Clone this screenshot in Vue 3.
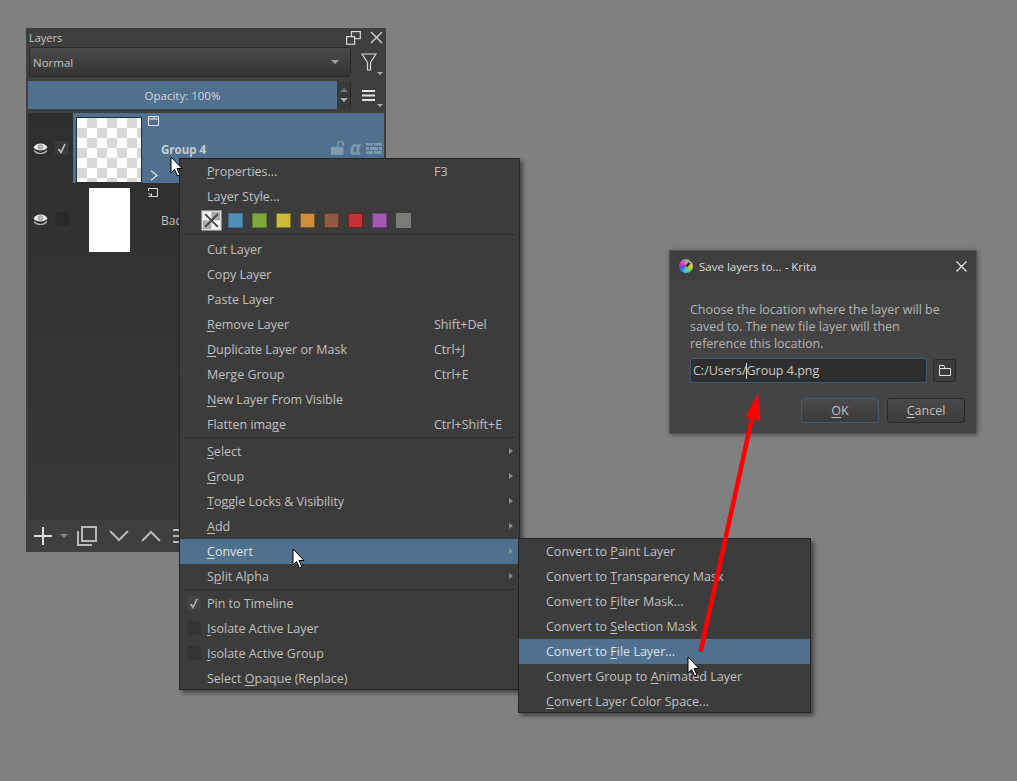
<script setup>
const main1 = [
  { t: '&Properties...', k: 'F3' },
  { t: 'La&yer Style...' },
]
const main2 = [
  { t: 'Cut Layer' },
  { t: 'Copy Layer' },
  { t: 'Paste Layer' },
  { t: '&Remove Layer', k: 'Shift+Del' },
  { t: '&Duplicate Layer or Mask', k: 'Ctrl+J' },
  { t: 'Merge Group', k: 'Ctrl+E' },
  { t: '&New Layer From Visible' },
  { t: 'Flatten ima&ge', k: 'Ctrl+Shift+E' },
]
const main3 = [
  { t: '&Select', sub: true },
  { t: '&Group', sub: true },
  { t: '&Toggle Locks & Visibility', sub: true },
  { t: '&Add', sub: true },
  { t: '&Convert', sub: true, on: true },
  { t: 'S&plit Alpha', sub: true },
]
const main4 = [
  { t: 'Pin to Timeline', check: 'on' },
  { t: '&Isolate Active Layer', check: 'off' },
  { t: '&Isolate Active Group', check: 'off' },
  { t: 'Select &Opaque (Replace)' },
]
const subs = [
  { t: 'Convert to &Paint Layer' },
  { t: 'Convert to &Transparency Mask' },
  { t: 'Convert to &Filter Mask...' },
  { t: 'Convert to &Selection Mask' },
  { t: 'Convert to &File Layer...', on: true },
  { t: 'Convert Group to &Animated Layer' },
  { t: '&Convert Layer Color Space...' },
]
const swatches = [
  ['#4f8fb8', '#3f6f8f'], ['#80a83a', '#5d7c2a'], ['#cbbb36', '#7d7326'], ['#d08f3c', '#7a5424'],
  ['#8f5a3f', '#5f3d2c'], ['#c43232', '#7a1f1f'], ['#a05ab0', '#6e3f7a'], ['#7a7c78', '#7a7c78'],
]
function parts(s) {
  const i = s.search(/&\S/)
  if (i < 0) return [s, '', '']
  return [s.slice(0, i), s[i + 1], s.slice(i + 2)]
}
</script>

<template>
  <div class="desk">
    <section class="panel">
      <header class="ptitle">
        <span>Layers</span>
        <span class="ptools">
          <svg width="15" height="14" viewBox="0 0 15 14" fill="none" stroke="#d8d8d8" stroke-width="1.2"><rect x="5.500" y="0.600" width="8.800" height="7"/><rect x="0.600" y="5.600" width="8" height="7.600" fill="#3f3f3f"/></svg>
          <svg width="13" height="13" viewBox="0 0 13 13" stroke="#d8d8d8" stroke-width="1.3"><path d="M1 1l11 11M12 1L1 12"/></svg>
        </span>
      </header>
      <div class="prow">
        <div class="combo"><span>Normal</span><i class="caret"></i></div>
        <div class="sidebtn">
          <svg width="16" height="18" viewBox="0 0 16 18" fill="none" stroke="#d8d8d8" stroke-width="1.2"><path d="M1 1h14L9.500 9.500V17H6.500V9.500z"/></svg>
          <i class="mini"></i>
        </div>
      </div>
      <div class="prow op">
        <div class="slider">
          <div class="sfill">Opacity: 100%</div>
          <div class="spin"><i class="up"></i><i class="down"></i></div>
        </div>
        <div class="sidebtn ham">
          <svg width="13" height="11" viewBox="0 0 13 11" stroke="#e2e2e2" stroke-width="2"><path d="M0 1h13M0 5.500h13M0 10h13"/></svg>
          <i class="mini"></i>
        </div>
      </div>
      <div class="layers">
        <div class="layer first">
          <div class="lcol">
            <svg class="eye" width="15" height="14" viewBox="0 0 15 14"><path d="M1 9.500C4.500 13.500 10.500 13.500 14 9.500" fill="none" stroke="#b0b0b0" stroke-width="1.200"/><path d="M.5 6.500C3 1 12 1 14.500 6.500 12 10.500 3 10.500 .5 6.500z" fill="#ececec"/><circle cx="7.500" cy="6" r="2.800" fill="#a4a4a4"/><circle cx="7.500" cy="6" r="1.300" fill="#c8c8c8"/></svg>
            <div class="cb">
              <svg width="10" height="11" viewBox="0 0 10 11" fill="none" stroke="#c8c8c8" stroke-width="1.600"><path d="M1.500 6l2.500 3.500 4-8.500"/></svg>
            </div>
          </div>
          <div class="lbody sel">
            <div class="thumb"></div>
            <div class="side">
              <svg width="11" height="10" viewBox="0 0 11 10" fill="none" stroke="#e8e8e8"><path d="M.5.500h10v9H.5zM.5 3h10M6 .5V3"/></svg>
              <svg class="chev" width="8" height="11" viewBox="0 0 8 11" fill="none" stroke="#dcdcdc" stroke-width="1.300"><path d="M1 .8l6 4.700-6 4.700"/></svg>
            </div>
            <div class="lname bold">Group 4</div>
            <div class="lflags">
              <svg width="13" height="14" viewBox="0 0 13 14" fill="#7f98ae"><path d="M0 6h12.500v8H0zM7.500 6V3a2 2 0 014 0v2h1.500V3a3.500 3.500 0 00-7 0v3z"/></svg>
              <span class="alpha">α</span>
              <svg width="16" height="11" viewBox="0 0 16 11" fill="#7f98ae"><path d="M0 0h7v2.500H0zM8 0h8v2.500H8zM0 4h3v3H0zM4 4h8v3H4zM13 4h3v3h-3zM0 8h7v3H0zM8 8h8v3H8z"/></svg>
            </div>
          </div>
        </div>
        <div class="layer second">
          <div class="lcol">
            <svg class="eye" width="15" height="14" viewBox="0 0 15 14"><path d="M1 9.500C4.500 13.500 10.500 13.500 14 9.500" fill="none" stroke="#b0b0b0" stroke-width="1.200"/><path d="M.5 6.500C3 1 12 1 14.500 6.500 12 10.500 3 10.500 .5 6.500z" fill="#ececec"/><circle cx="7.500" cy="6" r="2.800" fill="#a4a4a4"/><circle cx="7.500" cy="6" r="1.300" fill="#c8c8c8"/></svg>
            <div class="cb"></div>
          </div>
          <div class="lbody">
            <div class="thumb2"><div class="white"></div></div>
            <div class="side s2">
              <svg width="10" height="9" viewBox="0 0 10 9" fill="none" stroke="#dcdcdc"><path d="M.5 3V.5h9v8H4M.5 5l3 3M.5 8.500h3v-3"/></svg>
            </div>
            <div class="lname">Background</div>
          </div>
        </div>
      </div>
      <footer class="ptools-bar">
        <svg width="18" height="18" viewBox="0 0 18 18" stroke="#dcdcdc" stroke-width="2"><path d="M9 0v18M0 9h18"/></svg>
        <i class="tcaret"></i>
        <svg width="20" height="20" viewBox="0 0 20 20" fill="none" stroke="#b8b8b8" stroke-width="2"><path d="M5 1h14v14H5zM1 5v14h14"/></svg>
        <svg width="20" height="12" viewBox="0 0 20 12" fill="none" stroke="#b8b8b8" stroke-width="2"><path d="M1 1l9 9 9-9"/></svg>
        <svg width="20" height="12" viewBox="0 0 20 12" fill="none" stroke="#b8b8b8" stroke-width="2"><path d="M1 11l9-9 9 9"/></svg>
        <svg width="12" height="14" viewBox="0 0 12 14" stroke="#b8b8b8" stroke-width="2"><path d="M0 1h12M0 7h12M0 13h12"/></svg>
      </footer>
    </section>

    <nav class="menu main">
      <div v-for="m in main1" :key="m.t" class="item">
        <span class="lab">{{ parts(m.t)[0] }}<u>{{ parts(m.t)[1] }}</u>{{ parts(m.t)[2] }}</span>
        <span class="key">{{ m.k }}</span>
      </div>
      <div class="swatches">
        <span class="none"><svg width="17" height="17" viewBox="0 0 16 16"><path d="M0 0h8v8H0z" fill="#f2f2f2"/><path d="M8 0h8v8H8zM0 8h8v8H0z" fill="#a8a8a8"/><path d="M8 8h8v8H8z" fill="#f2f2f2"/><path d="M2 2l12 12M14 2L2 14" stroke="#444" stroke-width="1.800"/></svg></span>
        <span v-for="s in swatches" :key="s[0]" class="sw" :style="{ background: s[0], borderColor: s[1] }"></span>
      </div>
      <div class="sep first-sep"></div>
      <div v-for="m in main2" :key="m.t" class="item">
        <span class="lab">{{ parts(m.t)[0] }}<u>{{ parts(m.t)[1] }}</u>{{ parts(m.t)[2] }}</span>
        <span class="key">{{ m.k }}</span>
      </div>
      <div class="sep"></div>
      <div v-for="m in main3" :key="m.t" class="item" :class="{ on: m.on }">
        <span class="lab">{{ parts(m.t)[0] }}<u>{{ parts(m.t)[1] }}</u>{{ parts(m.t)[2] }}</span>
        <i class="arrow"></i>
      </div>
      <div class="sep"></div>
      <div v-for="m in main4" :key="m.t" class="item">
        <span v-if="m.check" class="mcheck" :class="{ lit: m.check === 'on' }">
          <svg v-if="m.check === 'on'" width="10" height="11" viewBox="0 0 10 11" fill="none" stroke="#b4b4b4" stroke-width="1.600"><path d="M1.500 6l2.500 3.500 4-8.500"/></svg>
        </span>
        <span class="lab">{{ parts(m.t)[0] }}<u>{{ parts(m.t)[1] }}</u>{{ parts(m.t)[2] }}</span>
      </div>
    </nav>

    <nav class="menu submenu">
      <div v-for="m in subs" :key="m.t" class="item" :class="{ on: m.on }">
        <span class="lab">{{ parts(m.t)[0] }}<u>{{ parts(m.t)[1] }}</u>{{ parts(m.t)[2] }}</span>
      </div>
    </nav>

    <section class="dialog">
      <header class="dtitle">
        <span class="logo"><svg width="14" height="14" viewBox="0 0 14 14" fill="none"><path d="M7.500 7.500L12 2" stroke="#2c2c2c" stroke-width="2.500"/><path d="M10 2.500l2 1.500" stroke="#cfcfcf" stroke-width="1.500"/></svg></span>
        <span>Save layers to... - Krita</span>
        <svg class="dclose" width="11" height="11" viewBox="0 0 11 11" stroke="#e4e4e4" stroke-width="1.200"><path d="M.5.500l10 10M10.500.5l-10 10"/></svg>
      </header>
      <div class="dbody">
        <p>Choose the location where the layer will be saved to. The new file layer will then reference this location.</p>
        <div class="drow">
          <div class="input">C:/Users/<i class="caretline"></i>Group 4.png</div>
          <div class="fbtn">
            <svg width="12" height="11" viewBox="0 0 12 11" fill="none" stroke="#e4e4e4"><path d="M.5 3.500h11v7H.5zM.5 3.500v-3h4.500l1 3"/></svg>
          </div>
        </div>
        <div class="dact">
          <div class="btn def"><u>O</u>K</div>
          <div class="btn"><u>C</u>ancel</div>
        </div>
      </div>
    </section>

    <svg class="overlay" width="1017" height="781" viewBox="0 0 1017 781">
      <path d="M700.500 652L752 418" stroke="#ff0000" stroke-width="4.500" fill="none"/>
      <path d="M758 393L760.500 421 745.500 417z" fill="#ff0000"/>
      <g stroke="#000" stroke-width="1" fill="#fff">
        <path d="M171 157v16l3.500-3.500 3 6.500 2.500-1-3-6.500h5z"/>
        <path d="M293 549v16l3.500-3.500 3 6.500 2.500-1-3-6.500h5z"/>
        <path d="M688 657v16l3.500-3.500 3 6.500 2.500-1-3-6.500h5z"/>
      </g>
    </svg>
  </div>
</template>

<style scoped>
.desk {
  position: relative;
  width: 1017px;
  height: 781px;
  overflow: hidden;
  background: #808080;
  font-family: "Open Sans", "Noto Sans", sans-serif;
  font-size: 12.5px;
  color: #c0c0c0;
}
u { text-underline-offset: 2px; text-decoration-thickness: 1px; }
i { display: block; }
.panel {
  position: absolute;
  left: 26px;
  top: 28px;
  width: 360px;
  height: 524px;
  background: #3f3f3f;
  display: flex;
  flex-direction: column;
  box-sizing: border-box;
  font-size: 11.5px;
}
.ptitle {
  height: 19px;
  flex: none;
  display: flex;
  justify-content: space-between;
  align-items: center;
  padding: 0 3px;
  color: #c4c4c4;
  font-size: 11px;
}
.ptools { display: flex; gap: 9px; align-items: center; }
.prow { display: flex; align-items: center; height: 30px; flex: none; padding-left: 3px; }
.prow.op { margin-top: 4px; height: 28px; }
.combo {
  width: 322px;
  height: 30px;
  box-sizing: border-box;
  border: 1px solid #2a2a2a;
  border-radius: 3px;
  background: linear-gradient(#4a4a4a, #353535);
  display: flex;
  align-items: center;
  justify-content: space-between;
  padding: 0 11px 0 3px;
}
.caret { width: 0; height: 0; border: 4px solid transparent; border-top: 4px solid #a0a0a0; border-bottom: 0; }
.sidebtn { position: relative; flex: 1; align-self: stretch; display: flex; align-items: center; justify-content: center; }
.mini { position: absolute; right: 3px; bottom: 2px; width: 0; height: 0; border: 3px solid transparent; border-top: 3px solid #a8a8a8; border-bottom: 0; }
.slider {
  width: 323px;
  margin-left: -1px;
  height: 28px;
  display: flex;
  box-sizing: border-box;
  border-radius: 3px;
  background: #3a3a3a;
  border: 1px solid #2a2a2a;
  border-width: 0 1px 0 0;
}
.sfill {
  flex: 1;
  background: #507090;
  display: flex;
  align-items: center;
  justify-content: center;
  color: #d4d4d4;
}
.spin { width: 13px; display: flex; flex-direction: column; align-items: center; justify-content: center; gap: 6px; }
.up { width: 0; height: 0; border: 4px solid transparent; border-bottom: 4px solid #777; border-top: 0; }
.down { width: 0; height: 0; border: 4px solid transparent; border-top: 4px solid #aaa; border-bottom: 0; }
.layers {
  flex: 1;
  min-height: 0;
  margin: 4px 2px 0 2px;
  background: linear-gradient(#2e2e2e, #383838);
}
.layer { display: flex; }
.layer.first { height: 70px; }
.layer.second { height: 72px; }
.lcol { width: 45px; flex: none; display: flex; align-items: center; padding-left: 5px; box-sizing: border-box; gap: 7px; }
.cb { width: 14px; height: 14px; background: #2a2a2a; display: flex; align-items: center; justify-content: center; }
.layer.first .cb { background: #3a3a3a; }
.lbody { position: relative; flex: 1; min-width: 0; display: flex; align-items: center; }
.lbody.sel { background: #507090; }
.thumb {
  width: 66px;
  height: 66px;
  box-sizing: border-box;
  margin: 3px 0 0 3px;
  border: 1px solid #22303c;
  background-color: #fff;
  background-image: conic-gradient(#d8d8d8 25%, #fff 0 50%, #d8d8d8 0 75%, #fff 0);
  background-size: 20px 20px;
}
.thumb2 { width: 66px; margin: 2px 0 0 3px; display: flex; justify-content: center; }
.white { width: 41px; height: 64px; background: #fff; }
.side { width: 19px; flex: none; align-self: stretch; display: flex; flex-direction: column; justify-content: space-between; padding: 3px 0 0 6px; box-sizing: border-box; }
.side.s2 { padding-top: 5px; }
.chev { margin-left: 2px; transform: translateY(-2px); }
.lname { padding-top: 2px; color: #c0c0c0; font-size: 12px; }
.lname.bold { font-weight: 700; color: #c6ccd2; font-size: 11.5px; }
.lflags { position: absolute; right: 2px; top: 28px; display: flex; gap: 5px; align-items: center; }
.alpha { font-size: 19px; line-height: 14px; color: #7f98ae; font-style: italic; font-weight: 700; }
.ptools-bar {
  height: 32px;
  flex: none;
  display: flex;
  align-items: center;
  padding-left: 8px;
  gap: 12px;
}
.tcaret { width: 0; height: 0; border: 4px solid transparent; border-top: 4px solid #888; border-bottom: 0; margin: 0 -3px 0 -4px; }
.menu {
  position: absolute;
  box-sizing: border-box;
  background: #3c3c3c;
  border: 1px solid #262626;
  box-shadow: 3px 3px 4px rgba(0, 0, 0, .45);
}
.main { left: 179px; top: 158px; width: 341px; height: 532px; }
.submenu { left: 518px; top: 538px; width: 293px; height: 175px; }
.item {
  height: 25px;
  display: flex;
  align-items: center;
  padding-left: 27px;
  position: relative;
  white-space: pre;
}
.item.on { background: #507090; color: #dde2e6; }
.key { position: absolute; left: 254px; }
.arrow { position: absolute; right: 6px; top: 9px; width: 0; height: 0; border: 3.500px solid transparent; border-left: 4px solid #8c8c8c; border-right: 0; }
.mcheck { position: absolute; left: 7px; top: 5px; width: 14px; height: 14px; background: #343434; display: flex; align-items: center; justify-content: center; }
.mcheck.lit { background: #444; }
.swatches { height: 23px; display: flex; align-items: center; padding-left: 21px; gap: 9px; }
.none { width: 21px; height: 21px; margin-right: -3px; background: #ddd; border: 1px solid #888; box-sizing: border-box; display: flex; align-items: center; justify-content: center; }
.sw { width: 15px; height: 15px; border: 1px solid; box-sizing: border-box; }
.sep { height: 1px; background: #2a2a2a; margin: 0 4px 1px; }
.first-sep { margin-top: 2px; margin-bottom: 2px; }
.dialog {
  position: absolute;
  left: 669px;
  top: 250px;
  width: 308px;
  height: 184px;
  box-sizing: border-box;
  background: #444;
  border: 1px solid #555;
  box-shadow: 1px 1px 5px rgba(0, 0, 0, .4);
}
.dtitle {
  height: 30px;
  background: #3f3f3f;
  display: flex;
  align-items: center;
  gap: 6px;
  padding: 0 9px;
  color: #dcdcdc;
  font-size: 11.5px;
}
.logo { width: 14px; height: 14px; border-radius: 50%; background: conic-gradient(#a0a0a0, #e8c83c 25%, #6fd05a 40%, #30c8e8 55%, #4050e0 68%, #e030c0 82%, #a0a0a0); margin-left: 0; }
.logo svg { display: block; }
.dclose { margin-left: auto; }
.dbody { padding: 20px 0 0 20px; }
.dbody p { margin: 0; width: 258px; line-height: 17px; color: #b4b4b4; }
.drow { display: flex; gap: 6px; margin-top: 6px; align-items: center; }
.input {
  width: 237px;
  height: 25px;
  box-sizing: border-box;
  border: 1px solid #3d5a78;
  border-radius: 3px;
  background: #2e2e2e;
  display: flex;
  align-items: center;
  padding-left: 2px;
  color: #c8c8c8;
  white-space: pre;
}
.caretline { width: 1px; height: 16px; background: #ddd; margin-right: -1px; }
.fbtn { width: 23px; height: 23px; box-sizing: border-box; border: 1px solid #2a2a2a; border-radius: 3px; background: #3c3c3c; display: flex; align-items: center; justify-content: center; }
.dact { display: flex; justify-content: flex-end; gap: 8px; margin: 15px 11px 0 0; }
.btn { width: 78px; height: 25px; box-sizing: border-box; border: 1px solid #2a2a2a; border-radius: 3px; background: linear-gradient(#4a4a4a, #3c3c3c); display: flex; align-items: center; justify-content: center; white-space: pre; color: #c0c0c0; }
.btn.def { border-color: #3d5a78; }
.overlay { position: absolute; left: 0; top: 0; pointer-events: none; }
</style>
